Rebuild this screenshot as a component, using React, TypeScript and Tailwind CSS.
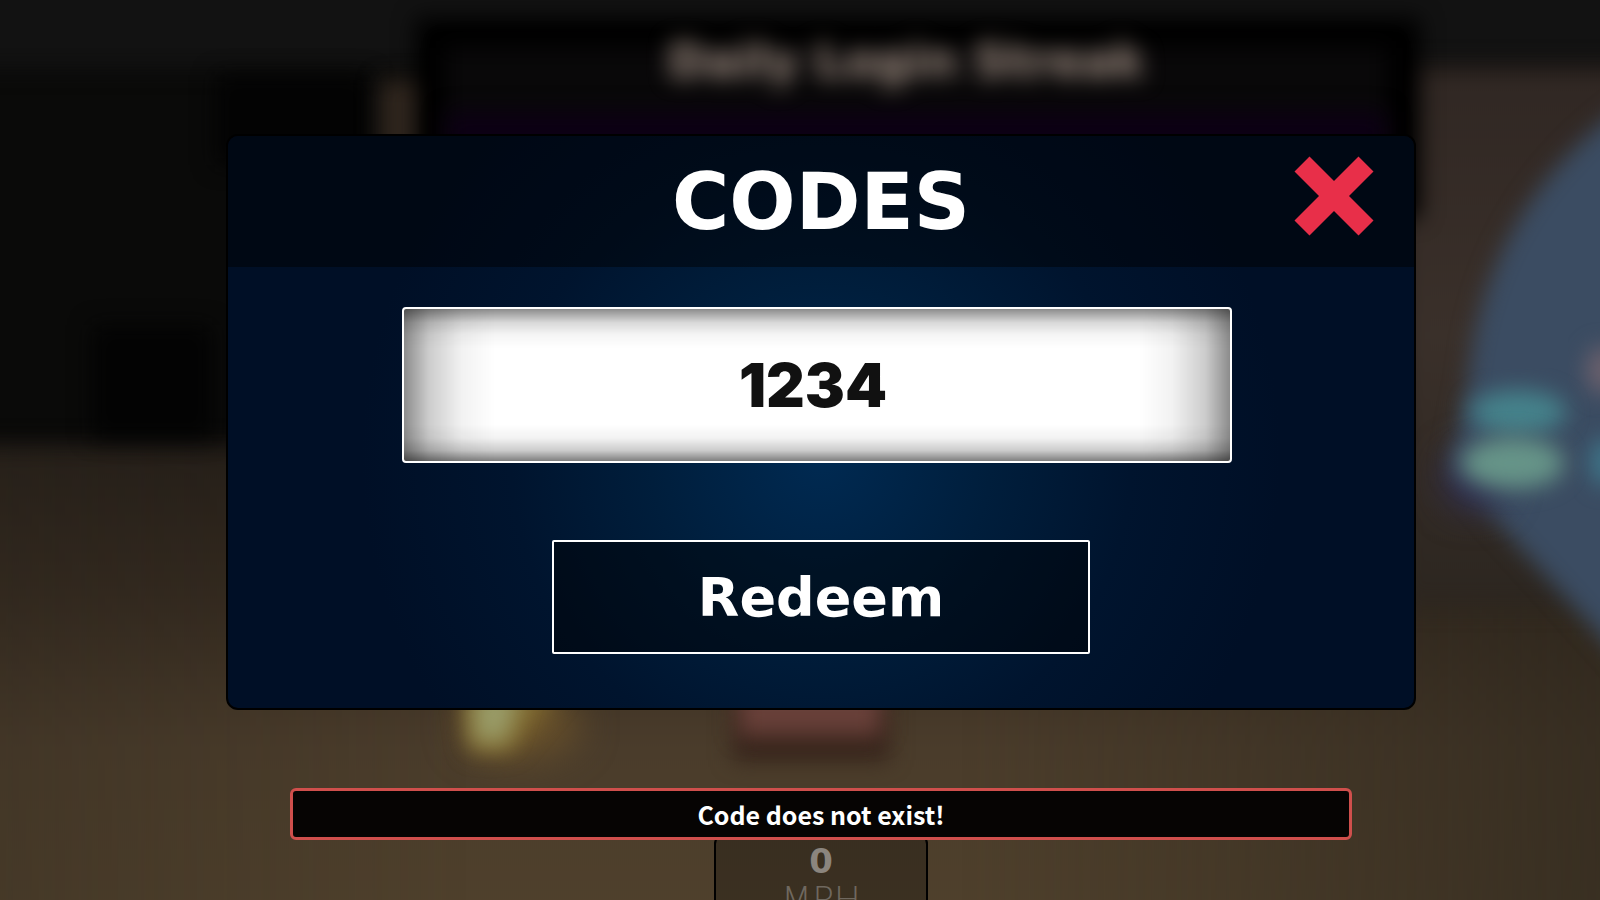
import { useState } from 'react';

function SceneBackdrop() {
  return (
    <svg
      className="absolute inset-0 w-full h-full"
      viewBox="0 0 1600 900"
      preserveAspectRatio="xMidYMid slice"
      aria-hidden="true"
    >
      <defs>
        <filter id="soft" x="-50%" y="-50%" width="200%" height="200%" colorInterpolationFilters="sRGB">
          <feGaussianBlur stdDeviation="11" />
        </filter>
        <filter id="softer" x="-100%" y="-100%" width="300%" height="300%" colorInterpolationFilters="sRGB">
          <feGaussianBlur stdDeviation="18" />
        </filter>
        <linearGradient id="floor" x1="0" y1="0" x2="0" y2="1">
          <stop offset="0" stopColor="#231d18" />
          <stop offset="0.3" stopColor="#33291f" />
          <stop offset="0.6" stopColor="#4a3c2b" />
          <stop offset="1" stopColor="#50412c" />
        </linearGradient>
        <linearGradient id="floorShade" x1="0" y1="0" x2="1" y2="0">
          <stop offset="0" stopColor="#2e271d" stopOpacity="0.3" />
          <stop offset="0.3" stopColor="#2e271d" stopOpacity="0" />
          <stop offset="0.6" stopColor="#2e271d" stopOpacity="0" />
          <stop offset="1" stopColor="#2e271d" stopOpacity="0.7" />
        </linearGradient>
        <linearGradient id="wall" x1="0" y1="0" x2="0" y2="1">
          <stop offset="0" stopColor="#302723" />
          <stop offset="0.5" stopColor="#3a302a" />
          <stop offset="1" stopColor="#2c2620" />
        </linearGradient>
      </defs>

      <rect width="1600" height="900" fill="#0a0a09" />
      <rect x="-40" y="445" width="1680" height="500" fill="url(#floor)" filter="url(#soft)" />
      <rect x="-40" y="450" width="1680" height="500" fill="url(#floorShade)" filter="url(#soft)" />

      {/* ceiling and left wall */}
      <rect x="-40" y="-40" width="1680" height="108" fill="#121212" filter="url(#soft)" />
      <rect x="215" y="75" width="155" height="90" fill="#030303" filter="url(#soft)" />
      <rect x="92" y="325" width="120" height="112" fill="#030303" filter="url(#soft)" />
      <rect x="380" y="80" width="60" height="110" fill="#31271f" filter="url(#soft)" />

      {/* right wall with the globe */}
      <rect x="1400" y="66" width="260" height="540" fill="url(#wall)" filter="url(#soft)" />
      <path d="M1640 95 Q1485 200 1468 380 L1450 470 L1640 680 Z" fill="#3b4c62" filter="url(#soft)" />
      <ellipse cx="1474" cy="480" rx="30" ry="30" fill="#2f2f52" filter="url(#softer)" />
      <ellipse cx="1518" cy="412" rx="48" ry="22" fill="#45828b" filter="url(#soft)" />
      <ellipse cx="1512" cy="463" rx="52" ry="26" fill="#669488" filter="url(#soft)" />
      <ellipse cx="1604" cy="370" rx="18" ry="24" fill="#6b606c" filter="url(#soft)" />
      <ellipse cx="1606" cy="462" rx="16" ry="24" fill="#3e7589" filter="url(#soft)" />

      {/* streak board */}
      <rect x="416" y="18" width="1004" height="200" fill="#000000" filter="url(#soft)" />
      <rect x="446" y="48" width="940" height="150" fill="#090809" filter="url(#soft)" />
      <rect x="446" y="112" width="940" height="70" fill="#0c0014" filter="url(#soft)" />
      <g filter="url(#soft)">
        <text
          x="906"
          y="77"
          textAnchor="middle"
          fill="#a08e82"
          className="font-['DejaVu_Sans'] text-[46px] font-bold"
        >
          Daily Login Streak
        </text>
      </g>

      {/* floor lights */}
      <ellipse cx="520" cy="725" rx="60" ry="34" fill="#664f2a" filter="url(#softer)" />
      <path d="M462 690 L562 690 L510 752 L470 752 Z" fill="#80692f" filter="url(#soft)" />
      <path d="M474 690 L522 690 L506 742 L474 742 Z" fill="#999c68" filter="url(#soft)" />
      <rect x="733" y="700" width="156" height="60" fill="#35231a" filter="url(#soft)" />
      <rect x="738" y="680" width="144" height="56" fill="#684039" filter="url(#soft)" />
    </svg>
  );
}

export default function App() {
  const [code, setCode] = useState('1234');
  const [message] = useState('Code does not exist!');

  return (
    <main className="relative h-screen overflow-hidden bg-[#0a0a09] text-white">
      <SceneBackdrop />

      <div className="relative flex flex-col pt-[134px] pl-[226px] pr-[184px]">
        <section
          role="dialog"
          aria-labelledby="codes-title"
          className="overflow-hidden rounded-xl border-2 border-black bg-[#000f26] bg-[radial-gradient(circle_at_50%_56%,#002a52_0px,#001e3c_170px,#00142e_310px,#000f26_460px)]"
        >
          <header className="grid grid-cols-[1fr_auto_1fr] items-center h-[131px] bg-black/45 pr-10">
            <h2
              id="codes-title"
              className="col-start-2 pl-10 font-['DejaVu_Sans',sans-serif] text-[78px] leading-[80px] font-bold"
            >
              CODES
            </h2>
            <button type="button" aria-label="Close" className="justify-self-end self-start mt-5">
              <svg className="w-20 h-20" viewBox="0 0 80 80" aria-hidden="true">
                <path
                  d="M15.500 .5 L40 25 L64.500 .5 L79.500 15.500 L55 40 L79.500 64.500 L64.500 79.500 L40 55 L15.500 79.500 L.5 64.500 L25 40 L.5 15.500 Z"
                  fill="#e82f49"
                />
              </svg>
            </button>
          </header>

          <form
            onSubmit={(e) => e.preventDefault()}
            className="flex flex-col items-center pt-10 pb-[54px]"
          >
            <input
              type="text"
              aria-label="Code"
              value={code}
              onChange={(e) => setCode(e.target.value)}
              className="mr-2 pr-2 w-[70%] h-[156px] rounded-sm border-2 border-white bg-white bg-[linear-gradient(to_right,rgba(0,0,0,0.45)_0%,rgba(0,0,0,0.2)_3%,rgba(0,0,0,0.05)_7%,transparent_11%,transparent_89%,rgba(0,0,0,0.05)_93%,rgba(0,0,0,0.2)_97%,rgba(0,0,0,0.45)_100%),linear-gradient(to_bottom,rgba(0,0,0,0.45)_0%,rgba(0,0,0,0.15)_9%,rgba(0,0,0,0.04)_17%,transparent_26%,transparent_76%,rgba(0,0,0,0.05)_85%,rgba(0,0,0,0.2)_93%,rgba(0,0,0,0.5)_100%)] text-center font-['Inter',sans-serif] text-[60px] font-black text-[#111111] outline-none"
            />
            <button
              type="submit"
              className="mt-[77px] w-[538px] max-w-full h-[114px] rounded-xs border-2 border-white bg-black/45 font-['DejaVu_Sans',sans-serif] text-[54px] font-bold"
            >
              Redeem
            </button>
          </form>
        </section>

        <p
          role="alert"
          className="relative z-10 mt-[78px] mx-16 flex items-center justify-center h-[52px] rounded-md border-3 border-[#cf4f4c] bg-[#060403] font-['Noto_Sans_CJK_SC',sans-serif] text-[25px] leading-8 font-bold"
        >
          {message}
        </p>

        <div className="-mt-2 self-center w-[214px] h-[120px] rounded-xl border-2 border-black bg-black/25 pt-2 text-center font-['DejaVu_Sans',sans-serif] text-[#8b857e]">
          <div className="text-[34px] leading-[38px] font-bold">0</div>
          <div className="text-[36px] leading-[40px] font-extralight text-[#6f685f]">MPH</div>
        </div>
      </div>
    </main>
  );
}
